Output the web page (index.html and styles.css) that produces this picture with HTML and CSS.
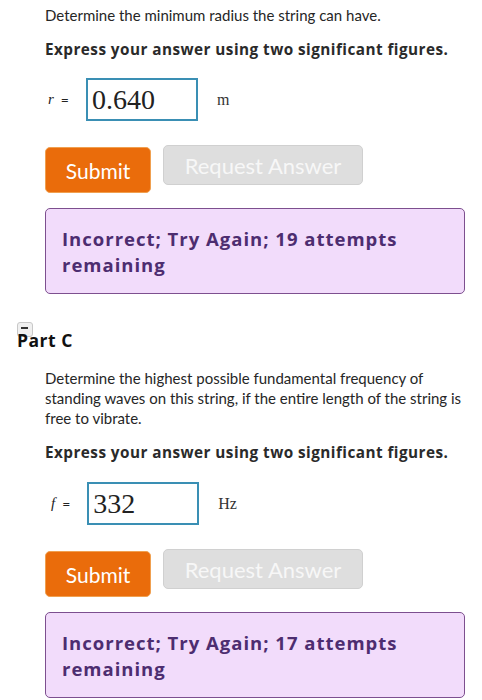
FILE: index.html
```html
<!DOCTYPE html>
<html>
<head>
<meta charset="utf-8">
<link rel="stylesheet" href="styles.css">
</head>
<body>
<div class="page">
  <section class="part">
    <p class="prompt">Determine the minimum radius the string can have.</p>
    <p class="instr">Express your answer using two significant figures.</p>
    <div class="answer">
      <span class="var">r</span><span class="eq">=</span>
      <div class="input">0.640</div>
      <span class="unit">m</span>
    </div>
    <div class="buttons">
      <button class="submit">Submit</button>
      <button class="request">Request Answer</button>
    </div>
    <div class="feedback">Incorrect; Try Again; 19 attempts remaining</div>
  </section>

  <div class="part-head">
    <span class="toggle"><span class="minus"></span></span>
    <h2>Part C</h2>
  </div>
  <section class="part">
    <p class="prompt multi">Determine the highest possible fundamental frequency of standing waves on this string, if the entire length of the string is free to vibrate.</p>
    <p class="instr">Express your answer using two significant figures.</p>
    <div class="answer second">
      <span class="var fvar">f</span><span class="eq">=</span>
      <div class="input">332</div>
      <span class="unit">Hz</span>
    </div>
    <div class="buttons">
      <button class="submit">Submit</button>
      <button class="request">Request Answer</button>
    </div>
    <div class="feedback">Incorrect; Try Again; 17 attempts remaining</div>
  </section>
</div>
</body>
</html>
```
FILE: styles.css
```css
html, body { margin: 0; padding: 0; background: #fff; }
body { font-family: Lato, "Open Sans", sans-serif; color: #222; }
.page { width: 482px; padding-top: 5px; }
.part { padding-left: 45px; padding-right: 17px; }
p { margin: 0; }
.prompt { font-size: 15px; line-height: 20px; color: #262626; }
.instr { font-family: "Open Sans", sans-serif; font-size: 15.3px; font-weight: 700; line-height: 20px; margin-top: 14px; color: #2a2a2a; letter-spacing: 0.45px; white-space: nowrap; }
.answer { display: flex; align-items: center; margin-top: 19px; height: 43px; }
.var { font-family: "Liberation Serif", serif; font-style: italic; font-size: 15px; margin-left: 3px; }
.fvar { margin-left: 6px; }
.eq { font-size: 14px; margin-left: 7px; margin-right: 17px; }
.input { width: 104px; height: 39px; border: 2px solid #3a8fb4; box-sizing: content-box; font-family: "Liberation Serif", serif; font-size: 28px; line-height: 39px; padding-left: 4px; color: #222; }
.unit { font-family: "Liberation Serif", serif; font-size: 16px; margin-left: 19px; color: #333; }
.buttons { display: flex; align-items: flex-start; gap: 12px; margin-top: 24px; }
button { border: none; font-family: Lato, "Open Sans", sans-serif; color: #fff; border-radius: 5px; padding: 0; }
.submit { width: 106px; height: 46px; background: #ea6c0b; font-size: 21px; margin-top: 2px; border: 1px solid #f0a050; }
.request { width: 200px; height: 40px; background: #dedede; color: #f7f7f7; font-size: 22px; border: 1px solid #d0d0d0; }
.feedback { margin-top: 15px; background: #f2dcfb; border: 1px solid #7d4f8f; border-radius: 5px; padding: 17px 16px 15px 16px; font-family: "Open Sans", sans-serif; font-size: 18.5px; font-weight: 700; line-height: 26px; color: #4d2d70; letter-spacing: 1px; }
.part-head { display: flex; align-items: flex-end; padding-left: 17px; margin-top: 28px; height: 28px; position: relative; }
.toggle { position: absolute; left: 17px; top: 0; width: 14px; height: 13px; border: 1px solid #c8c8c8; border-radius: 3px; background: #f0f0f0; }
.minus { position: absolute; left: 3px; top: 4px; width: 7px; height: 2px; background: #333; }
h2 { margin: 0; font-family: "Open Sans", sans-serif; font-size: 17.5px; font-weight: 700; line-height: 20px; color: #111; position: relative; letter-spacing: 0.5px; }
.multi { margin-top: 18px; }
.second { margin-top: 20px; }
```
